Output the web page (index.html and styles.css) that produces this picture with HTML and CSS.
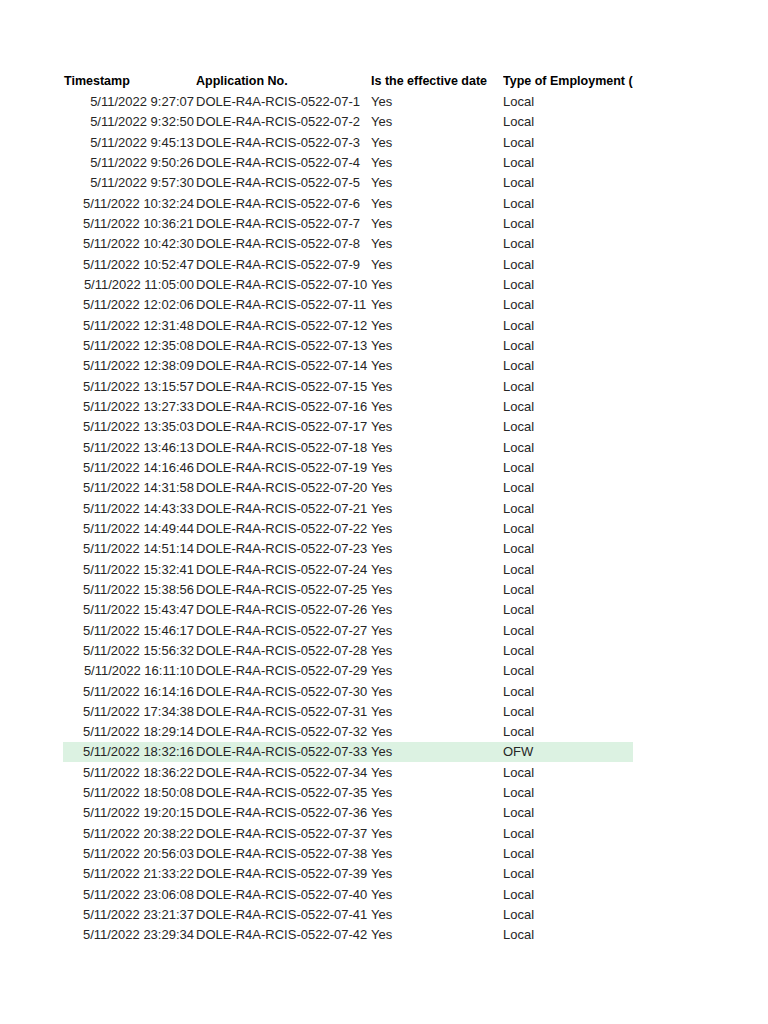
FILE: index.html
```html
<!DOCTYPE html>
<html lang="en">
<head>
    <meta charset="UTF-8">
    <meta name="viewport" content="width=device-width, initial-scale=1.0">
    <title>Applications</title>
    <link rel="stylesheet" href="styles.css">
</head>
<body>

    <div class="sheet">
        <div class="row head">
            <div class="cell ts">Timestamp</div>
            <div class="cell">Application No.</div>
            <div class="cell">Is the effective date</div>
            <div class="cell">Type of Employment (</div>
        </div>
        <div class="row"><div class="cell ts">5/11/2022 9:27:07</div><div class="cell">DOLE-R4A-RCIS-0522-07-1</div><div class="cell">Yes</div><div class="cell">Local</div></div>
        <div class="row"><div class="cell ts">5/11/2022 9:32:50</div><div class="cell">DOLE-R4A-RCIS-0522-07-2</div><div class="cell">Yes</div><div class="cell">Local</div></div>
        <div class="row"><div class="cell ts">5/11/2022 9:45:13</div><div class="cell">DOLE-R4A-RCIS-0522-07-3</div><div class="cell">Yes</div><div class="cell">Local</div></div>
        <div class="row"><div class="cell ts">5/11/2022 9:50:26</div><div class="cell">DOLE-R4A-RCIS-0522-07-4</div><div class="cell">Yes</div><div class="cell">Local</div></div>
        <div class="row"><div class="cell ts">5/11/2022 9:57:30</div><div class="cell">DOLE-R4A-RCIS-0522-07-5</div><div class="cell">Yes</div><div class="cell">Local</div></div>
        <div class="row"><div class="cell ts">5/11/2022 10:32:24</div><div class="cell">DOLE-R4A-RCIS-0522-07-6</div><div class="cell">Yes</div><div class="cell">Local</div></div>
        <div class="row"><div class="cell ts">5/11/2022 10:36:21</div><div class="cell">DOLE-R4A-RCIS-0522-07-7</div><div class="cell">Yes</div><div class="cell">Local</div></div>
        <div class="row"><div class="cell ts">5/11/2022 10:42:30</div><div class="cell">DOLE-R4A-RCIS-0522-07-8</div><div class="cell">Yes</div><div class="cell">Local</div></div>
        <div class="row"><div class="cell ts">5/11/2022 10:52:47</div><div class="cell">DOLE-R4A-RCIS-0522-07-9</div><div class="cell">Yes</div><div class="cell">Local</div></div>
        <div class="row"><div class="cell ts">5/11/2022 11:05:00</div><div class="cell">DOLE-R4A-RCIS-0522-07-10</div><div class="cell">Yes</div><div class="cell">Local</div></div>
        <div class="row"><div class="cell ts">5/11/2022 12:02:06</div><div class="cell">DOLE-R4A-RCIS-0522-07-11</div><div class="cell">Yes</div><div class="cell">Local</div></div>
        <div class="row"><div class="cell ts">5/11/2022 12:31:48</div><div class="cell">DOLE-R4A-RCIS-0522-07-12</div><div class="cell">Yes</div><div class="cell">Local</div></div>
        <div class="row"><div class="cell ts">5/11/2022 12:35:08</div><div class="cell">DOLE-R4A-RCIS-0522-07-13</div><div class="cell">Yes</div><div class="cell">Local</div></div>
        <div class="row"><div class="cell ts">5/11/2022 12:38:09</div><div class="cell">DOLE-R4A-RCIS-0522-07-14</div><div class="cell">Yes</div><div class="cell">Local</div></div>
        <div class="row"><div class="cell ts">5/11/2022 13:15:57</div><div class="cell">DOLE-R4A-RCIS-0522-07-15</div><div class="cell">Yes</div><div class="cell">Local</div></div>
        <div class="row"><div class="cell ts">5/11/2022 13:27:33</div><div class="cell">DOLE-R4A-RCIS-0522-07-16</div><div class="cell">Yes</div><div class="cell">Local</div></div>
        <div class="row"><div class="cell ts">5/11/2022 13:35:03</div><div class="cell">DOLE-R4A-RCIS-0522-07-17</div><div class="cell">Yes</div><div class="cell">Local</div></div>
        <div class="row"><div class="cell ts">5/11/2022 13:46:13</div><div class="cell">DOLE-R4A-RCIS-0522-07-18</div><div class="cell">Yes</div><div class="cell">Local</div></div>
        <div class="row"><div class="cell ts">5/11/2022 14:16:46</div><div class="cell">DOLE-R4A-RCIS-0522-07-19</div><div class="cell">Yes</div><div class="cell">Local</div></div>
        <div class="row"><div class="cell ts">5/11/2022 14:31:58</div><div class="cell">DOLE-R4A-RCIS-0522-07-20</div><div class="cell">Yes</div><div class="cell">Local</div></div>
        <div class="row"><div class="cell ts">5/11/2022 14:43:33</div><div class="cell">DOLE-R4A-RCIS-0522-07-21</div><div class="cell">Yes</div><div class="cell">Local</div></div>
        <div class="row"><div class="cell ts">5/11/2022 14:49:44</div><div class="cell">DOLE-R4A-RCIS-0522-07-22</div><div class="cell">Yes</div><div class="cell">Local</div></div>
        <div class="row"><div class="cell ts">5/11/2022 14:51:14</div><div class="cell">DOLE-R4A-RCIS-0522-07-23</div><div class="cell">Yes</div><div class="cell">Local</div></div>
        <div class="row"><div class="cell ts">5/11/2022 15:32:41</div><div class="cell">DOLE-R4A-RCIS-0522-07-24</div><div class="cell">Yes</div><div class="cell">Local</div></div>
        <div class="row"><div class="cell ts">5/11/2022 15:38:56</div><div class="cell">DOLE-R4A-RCIS-0522-07-25</div><div class="cell">Yes</div><div class="cell">Local</div></div>
        <div class="row"><div class="cell ts">5/11/2022 15:43:47</div><div class="cell">DOLE-R4A-RCIS-0522-07-26</div><div class="cell">Yes</div><div class="cell">Local</div></div>
        <div class="row"><div class="cell ts">5/11/2022 15:46:17</div><div class="cell">DOLE-R4A-RCIS-0522-07-27</div><div class="cell">Yes</div><div class="cell">Local</div></div>
        <div class="row"><div class="cell ts">5/11/2022 15:56:32</div><div class="cell">DOLE-R4A-RCIS-0522-07-28</div><div class="cell">Yes</div><div class="cell">Local</div></div>
        <div class="row"><div class="cell ts">5/11/2022 16:11:10</div><div class="cell">DOLE-R4A-RCIS-0522-07-29</div><div class="cell">Yes</div><div class="cell">Local</div></div>
        <div class="row"><div class="cell ts">5/11/2022 16:14:16</div><div class="cell">DOLE-R4A-RCIS-0522-07-30</div><div class="cell">Yes</div><div class="cell">Local</div></div>
        <div class="row"><div class="cell ts">5/11/2022 17:34:38</div><div class="cell">DOLE-R4A-RCIS-0522-07-31</div><div class="cell">Yes</div><div class="cell">Local</div></div>
        <div class="row"><div class="cell ts">5/11/2022 18:29:14</div><div class="cell">DOLE-R4A-RCIS-0522-07-32</div><div class="cell">Yes</div><div class="cell">Local</div></div>
        <div class="row marked"><div class="cell ts">5/11/2022 18:32:16</div><div class="cell">DOLE-R4A-RCIS-0522-07-33</div><div class="cell">Yes</div><div class="cell">OFW</div></div>
        <div class="row"><div class="cell ts">5/11/2022 18:36:22</div><div class="cell">DOLE-R4A-RCIS-0522-07-34</div><div class="cell">Yes</div><div class="cell">Local</div></div>
        <div class="row"><div class="cell ts">5/11/2022 18:50:08</div><div class="cell">DOLE-R4A-RCIS-0522-07-35</div><div class="cell">Yes</div><div class="cell">Local</div></div>
        <div class="row"><div class="cell ts">5/11/2022 19:20:15</div><div class="cell">DOLE-R4A-RCIS-0522-07-36</div><div class="cell">Yes</div><div class="cell">Local</div></div>
        <div class="row"><div class="cell ts">5/11/2022 20:38:22</div><div class="cell">DOLE-R4A-RCIS-0522-07-37</div><div class="cell">Yes</div><div class="cell">Local</div></div>
        <div class="row"><div class="cell ts">5/11/2022 20:56:03</div><div class="cell">DOLE-R4A-RCIS-0522-07-38</div><div class="cell">Yes</div><div class="cell">Local</div></div>
        <div class="row"><div class="cell ts">5/11/2022 21:33:22</div><div class="cell">DOLE-R4A-RCIS-0522-07-39</div><div class="cell">Yes</div><div class="cell">Local</div></div>
        <div class="row"><div class="cell ts">5/11/2022 23:06:08</div><div class="cell">DOLE-R4A-RCIS-0522-07-40</div><div class="cell">Yes</div><div class="cell">Local</div></div>
        <div class="row"><div class="cell ts">5/11/2022 23:21:37</div><div class="cell">DOLE-R4A-RCIS-0522-07-41</div><div class="cell">Yes</div><div class="cell">Local</div></div>
        <div class="row"><div class="cell ts">5/11/2022 23:29:34</div><div class="cell">DOLE-R4A-RCIS-0522-07-42</div><div class="cell">Yes</div><div class="cell">Local</div></div>
    </div>

</body>
</html>
```

FILE: styles.css
```css
body {
    font-family: "Liberation Sans", Arial, sans-serif;
    background-color: #fff;
    color: #262626;
    margin: 0;
    padding: 0;
}
.sheet {
    width: 570px;
    padding: 71px 0 0 63px;
}
.row {
    display: grid;
    grid-template-columns: 133px 175px 132px 130px;
    height: 20.34px;
    align-items: center;
    font-size: 13px;
}
.cell {
    white-space: nowrap;
    overflow: hidden;
}
.cell.ts {
    text-align: right;
    padding-right: 2px;
}
.head {
    font-weight: bold;
    color: #000;
    font-size: 12.5px;
}
.head .cell.ts {
    text-align: left;
    padding-left: 1px;
}
.marked {
    background-color: #dcf2e2;
}
```
